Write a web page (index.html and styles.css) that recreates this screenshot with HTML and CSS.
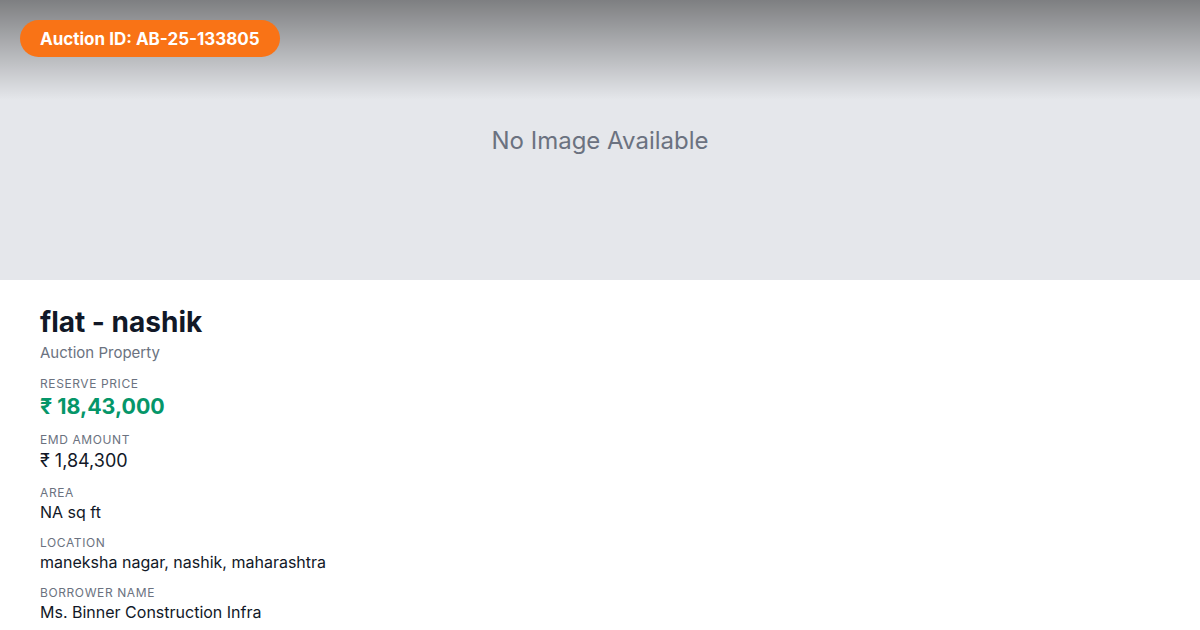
FILE: index.html
```html
<!DOCTYPE html>
<html>
<head>
<meta charset="utf-8">
<link rel="stylesheet" href="styles.css">
</head>
<body>
<div class="card">
  <div class="hero">
    <div class="shade"></div>
    <span class="badge">Auction ID: AB-25-133805</span>
    <span class="noimg">No Image Available</span>
  </div>
  <div class="body">
    <h1 class="title">flat - nashik</h1>
    <p class="sub">Auction Property</p>
    <div class="field">
      <div class="label">Reserve Price</div>
      <div class="value price">₹ 18,43,000</div>
    </div>
    <div class="field">
      <div class="label">EMD Amount</div>
      <div class="value emd">₹ 1,84,300</div>
    </div>
    <div class="field">
      <div class="label">Area</div>
      <div class="value">NA sq ft</div>
    </div>
    <div class="field">
      <div class="label">Location</div>
      <div class="value">maneksha nagar, nashik, maharashtra</div>
    </div>
    <div class="field">
      <div class="label">Borrower Name</div>
      <div class="value">Ms. Binner Construction Infra</div>
    </div>
  </div>
</div>
</body>
</html>
```
FILE: styles.css
```css
* { box-sizing: border-box; }
html, body { margin: 0; padding: 0; }
body {
  width: 1200px;
  height: 630px;
  overflow: hidden;
  background: #ffffff;
  font-family: Inter, "Noto Sans", sans-serif;
  color: #111827;
}
.hero {
  position: relative;
  height: 280px;
  background: #e5e7eb;
  display: flex;
  align-items: center;
  justify-content: center;
}
.shade {
  position: absolute;
  left: 0; right: 0; top: 0;
  height: 100px;
  background: linear-gradient(to bottom, rgba(0,0,0,0.45), rgba(0,0,0,0));
}
.badge {
  position: absolute;
  left: 20px;
  top: 20px;
  height: 37px;
  padding: 0 20px;
  display: flex;
  align-items: center;
  background: #f97316;
  color: #fff;
  font-weight: 700;
  font-size: 17px;
  border-radius: 999px;
}
.noimg {
  font-size: 24px;
  color: #6b7280;
}
.body {
  padding: 24px 40px 0;
}
.title {
  margin: 0;
  font-size: 28px;
  line-height: 36px;
  font-weight: 700;
  color: #111827;
}
.sub {
  margin: 2px 0 12px;
  font-size: 15px;
  line-height: 22px;
  color: #6b7280;
}
.field { margin-bottom: 11px; }
.label {
  font-size: 12px;
  line-height: 15px;
  text-transform: uppercase;
  letter-spacing: 0.05em;
  color: #6b7280;
}
.value {
  font-size: 16px;
  line-height: 24px;
  color: #111827;
}
.value.emd {
  font-size: 18px;
  line-height: 27px;
}
.value.price {
  font-size: 21.4px;
  line-height: 30px;
  font-weight: 700;
  color: #059669;
}
```
